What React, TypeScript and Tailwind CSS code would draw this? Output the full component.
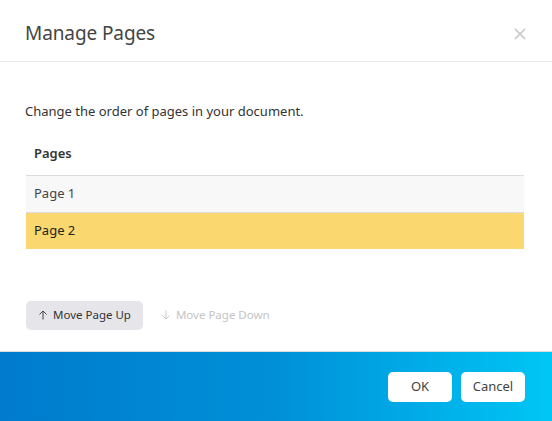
import React from 'react';

export default function App() {
  return (
    <div
      className="w-[552px] h-[421px] bg-white flex flex-col text-[#333]"
      style={{ fontFamily: '"Noto Sans", "Open Sans", sans-serif' }}
    >
      <div className="h-[62px] shrink-0 flex items-center justify-between pt-[6px] pl-[25px] pr-[26px] border-b border-[#ebebeb]">
        <h1 className="text-[19px] text-[#444] font-normal tracking-[-0.1px]">Manage Pages</h1>
        <svg width="12" height="12" viewBox="0 0 12 12" className="mt-[1px]">
          <path d="M1 1 L11 11 M11 1 L1 11" stroke="#c4c4c4" strokeWidth="1.5" />
        </svg>
      </div>

      <div className="flex-1 pl-[26px] pr-[28px] pt-[40px]">
        <p className="text-[13px] -ml-[1px] text-[#333]">Change the order of pages in your document.</p>

        <div className="mt-[12px]">
          <div className="h-[42px] flex items-center px-[8px] text-[13px] font-semibold text-[#333] border-b border-[#dcdcdc]">
            Pages
          </div>
          <div className="h-[37px] flex items-center px-[8px] text-[13px] text-[#444] bg-[#f8f8f8] border-b border-[#dcdcdc]">
            Page 1
          </div>
          <div className="h-[36px] flex items-center px-[8px] text-[13px] text-[#222] bg-[#fbd76f]">
            Page 2
          </div>
        </div>

        <div className="mt-[52px] flex items-center gap-[10px]">
          <button className="h-[29px] px-[12px] rounded-[5px] bg-[#e6e6ea] text-[11.5px] text-[#333] flex items-center gap-[5px]">
            <svg width="10" height="10" viewBox="0 0 10 10">
              <path d="M5 9.5 V1 M1.5 4.5 L5 1 L8.5 4.5" stroke="#444" strokeWidth="1" fill="none" />
            </svg>
            Move Page Up
          </button>
          <button className="h-[29px] px-[8px] rounded-[5px] text-[11.5px] text-[#c4c4c4] flex items-center gap-[5px]" disabled>
            <svg width="10" height="10" viewBox="0 0 10 10">
              <path d="M5 0.5 V9 M1.5 5.5 L5 9 L8.5 5.5" stroke="#c8c8c8" strokeWidth="1" fill="none" />
            </svg>
            Move Page Down
          </button>
        </div>
      </div>

      <div className="h-[70px] shrink-0 border-t border-[#dedede] bg-linear-to-r from-[#007bcd] via-[#0090d8] to-[#00c6f5] flex items-center justify-end gap-[9px] pr-[27px]">
        <button className="w-[64px] h-[30px] rounded-[5px] bg-white text-[13px] text-[#444]">OK</button>
        <button className="w-[64px] h-[30px] rounded-[5px] bg-white text-[13px] text-[#444]">Cancel</button>
      </div>
    </div>
  );
}
